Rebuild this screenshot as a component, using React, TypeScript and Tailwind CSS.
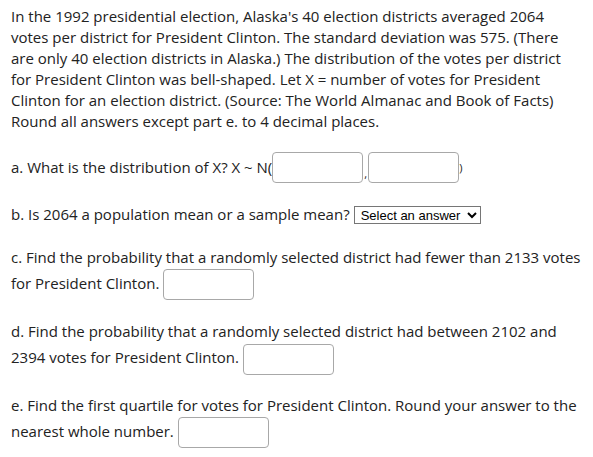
import React from "react";

function Box({ className = "" }: { className?: string }) {
  return (
    <input
      type="text"
      className={`inline-block h-[31px] w-[91px] rounded-[4px] border border-[#a8a8a8] bg-white align-middle ${className}`}
    />
  );
}

export default function App() {
  return (
    <div className="min-h-screen bg-white px-[11px] pt-[6px] font-['Open_Sans',sans-serif] text-[15px] leading-[21px] text-[#222]">
      <p>
        In the 1992 presidential election, Alaska's 40 election districts averaged 2064 votes per
        district for President Clinton. The standard deviation was 575. (There are only 40 election
        districts in Alaska.) The distribution of the votes per district for President Clinton was
        bell-shaped. Let X = number of votes for President Clinton for an election district.
        (Source: The World Almanac and Book of Facts) Round all answers except part e. to 4 decimal
        places.
      </p>

      <p className="mt-[20px] flex items-center">
        <span>a. What is the distribution of X? X ~ N(</span>
        <Box />
        <span className="mx-[1px] self-end text-[11px] leading-[18px]">,</span>
        <Box />
        <span className="text-[11px]">)</span>
      </p>

      <p className="mt-[21px] flex items-center">
        <span>b. Is 2064 a population mean or a sample mean?</span>
        <select className="ml-[4px] h-[18px] w-[127px] border border-[#767676] bg-white pl-[2px] font-['Liberation_Sans',Arial,sans-serif] text-[13px] leading-[16px] text-black">
          <option>Select an answer</option>
        </select>
      </p>

      <p className="mt-[19px] leading-[26px]">
        c. Find the probability that a randomly selected district had fewer than 2133 votes for
        President Clinton. <Box className="-my-[4px]" />
      </p>

      <p className="mt-[22px] leading-[26px]">
        d. Find the probability that a randomly selected district had between 2102 and 2394 votes
        for President Clinton. <Box className="-my-[4px]" />
      </p>

      <p className="mt-[21px] leading-[26px]">
        e. Find the first quartile for votes for President Clinton. Round your answer to the
        nearest whole number. <Box className="-my-[4px]" />
      </p>
    </div>
  );
}
